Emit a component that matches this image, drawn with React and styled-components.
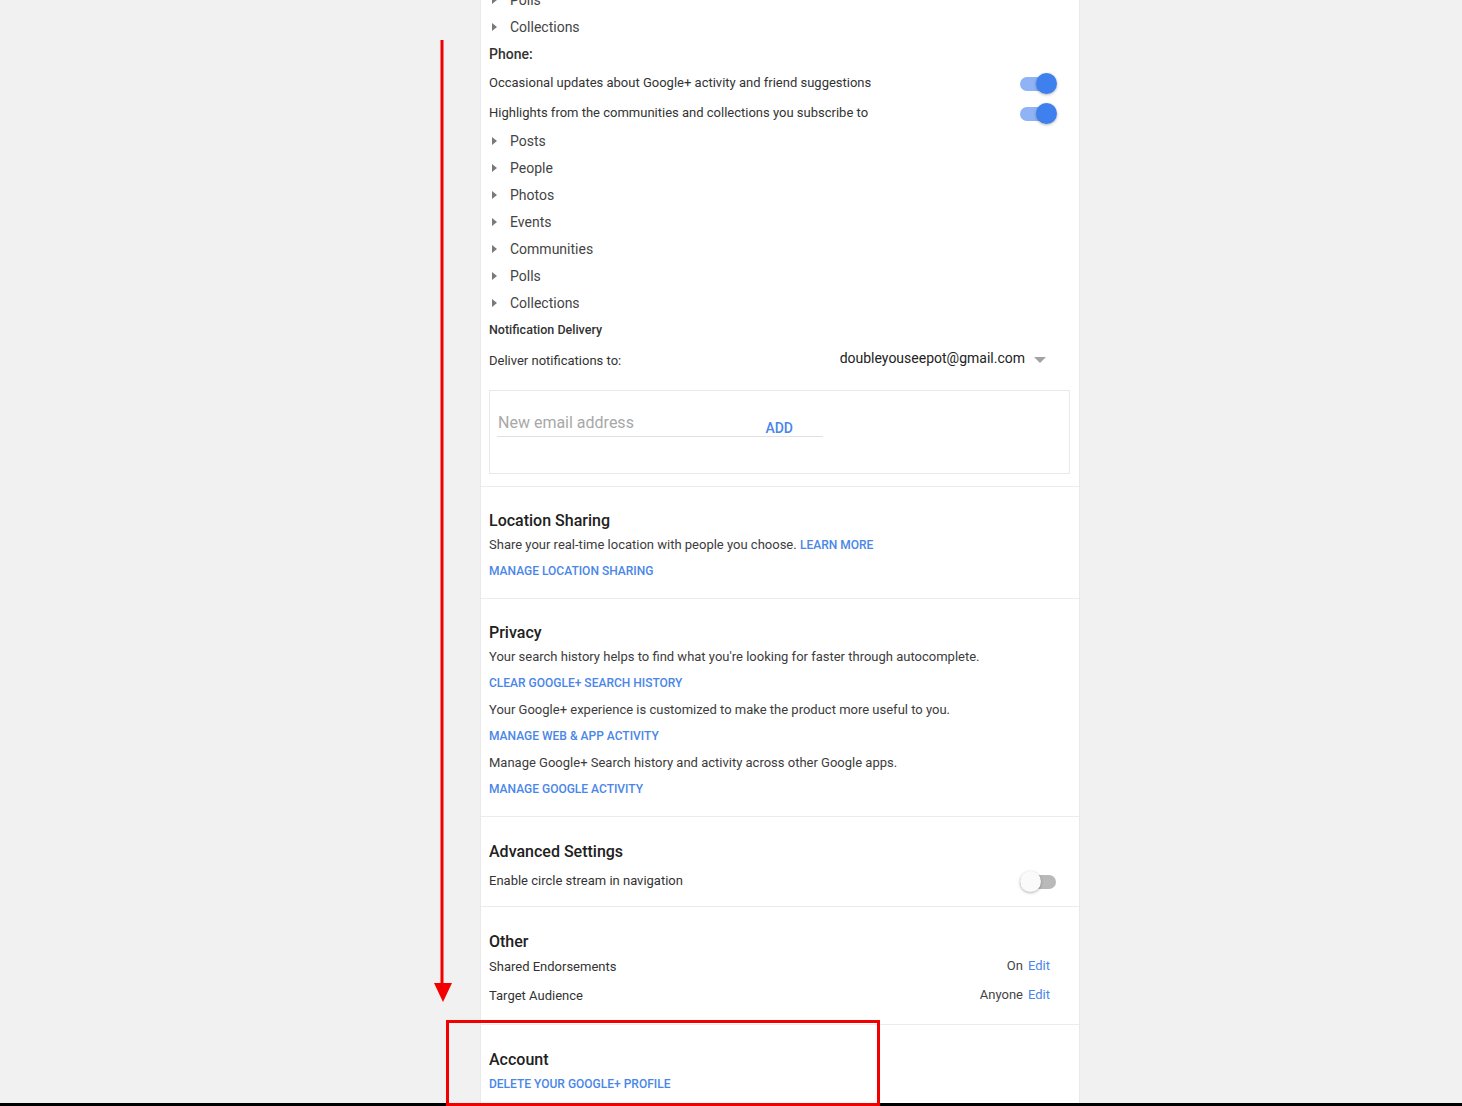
import React from "react";
import styled, { createGlobalStyle } from "styled-components";

const Global = createGlobalStyle`
  html, body { margin: 0; padding: 0; background: #f1f1f1; }
  body { font-family: Roboto, "Noto Sans", "Liberation Sans", sans-serif; -webkit-font-smoothing: antialiased; }
  * { box-sizing: border-box; }
`;

const Page = styled.div`
  position: relative;
  height: 1106px;
  display: flex;
  flex-direction: column;
  overflow: hidden;
  background: #f1f1f1;
`;

const Stage = styled.div`
  flex: 1;
  overflow: hidden;
  padding-left: 480px;
`;

const BottomRule = styled.div`
  height: 3px;
  background: #000;
  flex: none;
`;

const Card = styled.div`
  width: 600px;
  margin-top: -14px;
  background: #fff;
  border-left: 1px solid #e9e9e9;
  border-right: 1px solid #e9e9e9;
  min-height: 1200px;
`;

const Section = styled.section`
  padding: ${(p) => p.$pad || "24px 0 18px 8px"};
  border-bottom: ${(p) => (p.$last ? "none" : "1px solid #ececec")};
`;

const ItemRow = styled.div`
  height: 27px;
  display: flex;
  align-items: center;
  gap: 13px;
  padding-left: 2px;
  font-size: 14px;
  color: #444;
`;

const Caret = styled.span`
  width: 0;
  height: 0;
  border-top: 4px solid transparent;
  border-bottom: 4px solid transparent;
  border-left: 5px solid #7a7a7a;
  margin-left: 1px;
`;

const Label = styled.div`
  height: 27px;
  display: flex;
  align-items: center;
  font-size: ${(p) => p.$size || "14px"};
  font-weight: 500;
  color: #333;
`;

const ToggleRow = styled.div`
  height: 30px;
  display: flex;
  align-items: center;
  justify-content: space-between;
  padding-right: 22px;
  font-size: 13px;
  color: #333;
`;

const ToggleWrap = styled.span`
  position: relative;
  width: 37px;
  height: 21px;
  flex: none;
  margin-top: ${(p) => p.$dy || "0"};
`;

const Track = styled.span`
  position: absolute;
  left: 0;
  right: 1px;
  top: 4px;
  height: 14px;
  border-radius: 7px;
  background: ${(p) => (p.$on ? "#8fb3f5" : "#b9b9b9")};
`;

const Thumb = styled.span`
  position: absolute;
  top: 0;
  left: ${(p) => (p.$on ? "16px" : "0")};
  width: 21px;
  height: 21px;
  border-radius: 50%;
  background: ${(p) => (p.$on ? "#3f80ef" : "#fafafa")};
  box-shadow: 0 1px 3px rgba(0, 0, 0, 0.3);
`;

const Toggle = ({ on, dy }) => (
  <ToggleWrap $dy={dy}>
    <Track $on={on} />
    <Thumb $on={on} />
  </ToggleWrap>
);

const DeliverRow = styled.div`
  height: 35px;
  display: flex;
  align-items: center;
  justify-content: space-between;
  padding-right: 33px;
  font-size: 13px;
  color: #333;
`;

const EmailSelect = styled.div`
  display: flex;
  align-items: center;
  gap: 9px;
  font-size: 14px;
  color: #222;
  margin-top: -5px;
`;

const DropTri = styled.span`
  width: 0;
  height: 0;
  border-left: 6px solid transparent;
  border-right: 6px solid transparent;
  border-top: 6px solid #a3a3a3;
  margin-top: 3px;
`;

const AddBox = styled.div`
  margin: 12px 9px 0 0;
  border: 1px solid #e9e9e9;
  padding: 22px 0 36px 7px;
`;

const InputRow = styled.div`
  width: 326px;
  display: flex;
  align-items: flex-end;
  border-bottom: 1px solid #e0e0e0;
`;

const EmailInput = styled.input`
  flex: 1;
  min-width: 0;
  border: none;
  outline: none;
  padding: 0 0 3px 1px;
  font-family: inherit;
  font-size: 16px;
  line-height: 20px;
  color: #333;
  background: transparent;
  &::placeholder { color: #a8a8a8; }
`;

const AddButton = styled.button`
  border: none;
  background: none;
  padding: 0 30px 0 0;
  font-family: inherit;
  font-size: 14px;
  font-weight: 500;
  line-height: 16px;
  color: #4a86e8;
  cursor: pointer;
`;

const Title = styled.h2`
  margin: 0;
  font-size: 16px;
  line-height: 20px;
  font-weight: 500;
  color: #212121;
`;

const Desc = styled.p`
  margin: ${(p) => (p.$first ? "5px" : "9px")} 0 0;
  font-size: 13px;
  line-height: 18px;
  color: #3c3c3c;
`;

const Link = styled.a`
  display: ${(p) => (p.$inline ? "inline" : "block")};
  margin-top: ${(p) => (p.$inline ? "0" : p.$tight ? "5px" : "8px")};
  font-size: 12px;
  line-height: 18px;
  font-weight: 500;
  text-transform: uppercase;
  color: #4a86e8;
  text-decoration: none;
`;

const SettingRow = styled.div`
  height: ${(p) => p.$h || "29px"};
  margin-top: ${(p) => p.$mt || "0"};
  display: flex;
  align-items: center;
  justify-content: space-between;
  padding-right: ${(p) => p.$pr || "29px"};
  font-size: 13px;
  color: #333;
`;

const RightValue = styled.span`
  font-size: 13px;
  color: #444;
  margin-top: -3px;
`;

const Edit = styled.a`
  margin-left: 5px;
  color: #4a86e8;
  text-decoration: none;
`;

const Annotation = styled.svg`
  position: absolute;
  left: 432px;
  top: 38px;
  overflow: visible;
`;

const Highlight = styled.div`
  position: absolute;
  left: 446px;
  top: 1020px;
  width: 434px;
  height: 86px;
  border: 3px solid #f20000;
  pointer-events: none;
`;

const items = ["Posts", "People", "Photos", "Events", "Communities", "Polls", "Collections"];

export default function App() {
  return (
    <>
      <Global />
      <Page>
        <Stage>
          <Card>
            <Section $pad="0 0 12px 8px">
              {["Polls", "Collections"].map((t) => (
                <ItemRow key={t}>
                  <Caret />
                  {t}
                </ItemRow>
              ))}
              <Label>Phone:</Label>
              <ToggleRow>
                Occasional updates about Google+ activity and friend suggestions
                <Toggle on dy="2px" />
              </ToggleRow>
              <ToggleRow>
                Highlights from the communities and collections you subscribe to
                <Toggle on dy="2px" />
              </ToggleRow>
              {items.map((t) => (
                <ItemRow key={t}>
                  <Caret />
                  {t}
                </ItemRow>
              ))}
              <Label $size="12.5px">Notification Delivery</Label>
              <DeliverRow>
                Deliver notifications to:
                <EmailSelect>
                  doubleyouseepot@gmail.com
                  <DropTri />
                </EmailSelect>
              </DeliverRow>
              <AddBox>
                <InputRow>
                  <EmailInput placeholder="New email address" />
                  <AddButton>ADD</AddButton>
                </InputRow>
              </AddBox>
            </Section>

            <Section>
              <Title>Location Sharing</Title>
              <Desc $first>
                Share your real-time location with people you choose.{" "}
                <Link $inline href="#">Learn more</Link>
              </Desc>
              <Link href="#">Manage location sharing</Link>
            </Section>

            <Section>
              <Title>Privacy</Title>
              <Desc $first>Your search history helps to find what you're looking for faster through autocomplete.</Desc>
              <Link href="#">Clear Google+ search history</Link>
              <Desc>Your Google+ experience is customized to make the product more useful to you.</Desc>
              <Link href="#">Manage Web &amp; App Activity</Link>
              <Desc>Manage Google+ Search history and activity across other Google apps.</Desc>
              <Link href="#">Manage Google activity</Link>
            </Section>

            <Section $pad="25px 0 14px 8px">
              <Title>Advanced Settings</Title>
              <SettingRow $h="24px" $mt="6px" $pr="22px">
                Enable circle stream in navigation
                <Toggle dy="2px" />
              </SettingRow>
            </Section>

            <Section $pad="25px 0 14px 8px">
              <Title>Other</Title>
              <SettingRow>
                Shared Endorsements
                <RightValue>
                  On<Edit href="#">Edit</Edit>
                </RightValue>
              </SettingRow>
              <SettingRow>
                Target Audience
                <RightValue>
                  Anyone<Edit href="#">Edit</Edit>
                </RightValue>
              </SettingRow>
            </Section>

            <Section $pad="25px 0 0 8px" $last>
              <Title>Account</Title>
              <Link $tight href="#">Delete your Google+ profile</Link>
            </Section>
          </Card>
        </Stage>
        <BottomRule />
        <Annotation width="22" height="966" viewBox="0 0 22 966">
          <rect x="8.5" y="2" width="3" height="950" fill="#f20000" />
          <polygon points="2,945 20,945 11,964" fill="#f20000" />
        </Annotation>
        <Highlight />
      </Page>
    </>
  );
}
